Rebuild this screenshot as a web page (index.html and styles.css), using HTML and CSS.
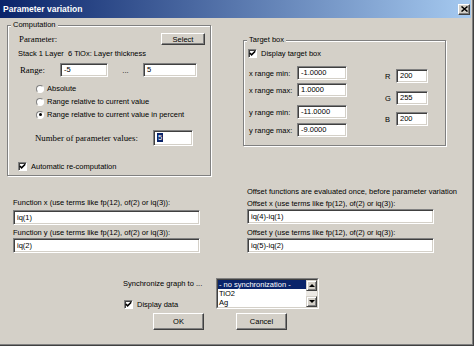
FILE: index.html
```html
<!DOCTYPE html>
<html>
    <head>
        <meta charset='utf-8'>
        <title>Parameter variation</title>
        <link rel="stylesheet" href="styles.css">
    </head>
    <body>
        <div class='window'>
            <div class='titlebar'>
                <span class='title'>Parameter variation</span>
                <div class='close'>
                    <svg width='7' height='6' viewBox='0 0 7 6'>
                        <path d='M0.5 0.5 L6.5 5.5 M6.5 0.5 L0.5 5.5' stroke='#000' stroke-width='1.5' fill='none'/>
                    </svg>
                </div>
            </div>
            <div class='client'>
                <div class='top'>
                    <fieldset class='group computation'>
                        <legend>Computation</legend>
                        <div class='row param-row'>
                            <span class='serif'>Parameter:</span>
                            <div class='btn select-btn'>Select</div>
                        </div>
                        <div class='row stack-row'>Stack 1 Layer&nbsp;&nbsp;6 TiOx: Layer thickness</div>
                        <div class='row range-row'>
                            <span class='serif range-label'>Range:</span>
                            <div class='edit range-from'>-5</div>
                            <span class='dots'>...</span>
                            <div class='edit range-to'>5</div>
                        </div>
                        <div class='radios'>
                            <div class='radio-row'><span class='radio'></span>Absolute</div>
                            <div class='radio-row'><span class='radio'></span>Range relative to current value</div>
                            <div class='radio-row'><span class='radio checked'></span>Range relative to current value in percent</div>
                        </div>
                        <div class='row count-row'>
                            <span class='serif count-label'>Number of parameter values:</span>
                            <div class='edit count-edit'><span class='sel'>5</span></div>
                        </div>
                        <div class='check-row auto-row'>
                            <span class='check'>
                                <svg width='7' height='7' viewBox='0 0 7 7'><polyline points='0.8,3 2.6,4.9 6.2,1.2' stroke='#000' stroke-width='1.6' fill='none'/></svg>
                            </span>
                            Automatic re-computation
                        </div>
                    </fieldset>
                    <fieldset class='group target'>
                        <legend>Target box</legend>
                        <div class='check-row display-row'>
                            <span class='check'>
                                <svg width='7' height='7' viewBox='0 0 7 7'><polyline points='0.8,3 2.6,4.9 6.2,1.2' stroke='#000' stroke-width='1.6' fill='none'/></svg>
                            </span>
                            Display target box
                        </div>
                        <div class='target-body'>
                            <div class='ranges'>
                                <div class='range-line xmin'><span class='rlabel'>x range min:</span><div class='edit redit'>-1.0000</div></div>
                                <div class='range-line xmax'><span class='rlabel'>x range max:</span><div class='edit redit'>1.0000</div></div>
                                <div class='range-line ymin'><span class='rlabel'>y range min:</span><div class='edit redit'>-11.0000</div></div>
                                <div class='range-line ymax'><span class='rlabel'>y range max:</span><div class='edit redit'>-9.0000</div></div>
                            </div>
                            <div class='colors'>
                                <div class='color-line r'><span class='clabel'>R</span><div class='edit cedit'>200</div></div>
                                <div class='color-line g'><span class='clabel'>G</span><div class='edit cedit'>255</div></div>
                                <div class='color-line b'><span class='clabel'>B</span><div class='edit cedit'>200</div></div>
                            </div>
                        </div>
                    </fieldset>
                </div>
                <div class='functions'>
                    <div class='fcol fcol-left'>
                        <div class='flabel fx-label'>Function x (use terms like fp(12), of(2) or iq(3)):</div>
                        <div class='edit fedit'>iq(1)</div>
                        <div class='flabel fy-label'>Function y (use terms like fp(12), of(2) or iq(3)):</div>
                        <div class='edit fedit fy-edit'>iq(2)</div>
                    </div>
                    <div class='fcol fcol-right'>
                        <div class='flabel'>Offset functions are evaluated once, before parameter variation</div>
                        <div class='flabel ox-label'>Offset x (use terms like fp(12), of(2) or iq(3)):</div>
                        <div class='edit fedit ox-edit'>iq(4)-iq(1)</div>
                        <div class='flabel oy-label'>Offset y (use terms like fp(12), of(2) or iq(3)):</div>
                        <div class='edit fedit oy-edit'>iq(5)-iq(2)</div>
                    </div>
                </div>
                <div class='sync'>
                    <div class='sync-left'>
                        <div class='sync-label'>Synchronize graph to ...</div>
                        <div class='check-row data-row'>
                            <span class='check'>
                                <svg width='7' height='7' viewBox='0 0 7 7'><polyline points='0.8,3 2.6,4.9 6.2,1.2' stroke='#000' stroke-width='1.6' fill='none'/></svg>
                            </span>
                            Display data
                        </div>
                    </div>
                    <div class='listbox'>
                        <div class='list-inner'>
                            <div class='items'>
                                <div class='item selected'>- no synchronization -</div>
                                <div class='item'>TiO2</div>
                                <div class='item'>Ag</div>
                            </div>
                            <div class='scrollbar'>
                                <div class='sbtn'><span class='arrow up'></span></div>
                                <div class='track'></div>
                                <div class='sbtn'><span class='arrow down'></span></div>
                            </div>
                        </div>
                    </div>
                </div>
                <div class='buttons'>
                    <div class='btn dlg-btn'>OK</div>
                    <div class='btn dlg-btn'>Cancel</div>
                </div>
            </div>
        </div>
    </body>
</html>
```
FILE: styles.css
```css
*{
    box-sizing: border-box;
}
body{
    margin: 0;
    background-color: #d4d0c8;
    font-family: "Liberation Sans", Arial, sans-serif;
    font-size: 7.5px;
    color: #000;
}

.window{
    width: 474px;
    height: 346px;
    display: flex;
    flex-direction: column;
    padding: 0 3px 3px 0;
    background-color: #d4d0c8;
    box-shadow: inset -1px -1px 0 #404040, inset -2px -2px 0 #808080;
}

.titlebar{
    height: 18px;
    display: flex;
    align-items: center;
    justify-content: space-between;
    padding: 0 1px 0 3px;
    background: linear-gradient(to right, #0a246a, #a6caf0);
    color: #fff;
    font-weight: bold;
    font-size: 8.5px;
}
.close{
    width: 12px;
    height: 11px;
    display: flex;
    align-items: center;
    justify-content: center;
    background-color: #d4d0c8;
    border: 1px solid;
    border-color: #fff #404040 #404040 #fff;
    box-shadow: inset -1px -1px 0 #808080;
}

.serif{
    font-family: "Liberation Serif", "Times New Roman", serif;
    font-size: 8.8px;
}

/* 3d controls */
.edit{
    height: 14px;
    line-height: 12px;
    padding-left: 3px;
    background-color: #fff;
    border: 1px solid;
    border-color: #808080 #fff #fff #808080;
    box-shadow: inset 1px 1px 0 #404040, inset -1px -1px 0 #d4d0c8;
    white-space: nowrap;
    overflow: hidden;
}
.btn{
    display: flex;
    align-items: center;
    justify-content: center;
    background-color: #d4d0c8;
    border: 1px solid;
    border-color: #fff #404040 #404040 #fff;
    box-shadow: inset -1px -1px 0 #808080;
}
.check{
    width: 9px;
    height: 9px;
    display: flex;
    align-items: center;
    justify-content: center;
    background-color: #fff;
    border: 1px solid;
    border-color: #808080 #fff #fff #808080;
    box-shadow: inset 1px 1px 0 #404040;
    margin-right: 4px;
}
.radio{
    width: 8px;
    height: 8px;
    border-radius: 50%;
    background-color: #fff;
    border: 1px solid;
    border-color: #808080 #fff #fff #808080;
    margin-right: 3px;
    display: flex;
    align-items: center;
    justify-content: center;
}
.radio.checked::after{
    content: '';
    width: 3px;
    height: 3px;
    border-radius: 50%;
    background-color: #000;
}

/* group boxes */
.top{
    display: flex;
    align-items: flex-start;
}
.group{
    margin: 0;
    padding: 0;
    border: 1px solid #808080;
    box-shadow: inset 1px 1px 0 #fff, 1px 1px 0 #fff;
    min-width: 0;
}
.group legend{
    margin-left: 3px;
    padding: 0 2px;
    line-height: 10px;
    background-color: #d4d0c8;
}
.computation{
    margin: 2px 0 0 7px;
    width: 204px;
    height: 156px;
}
.target{
    margin: 17px 0 0 32px;
    width: 203px;
    height: 111px;
}

.row{
    display: flex;
    align-items: center;
}
.param-row{
    height: 12px;
    margin-top: 3px;
    padding-left: 11px;
}
.select-btn{
    width: 44px;
    height: 12px;
    margin-left: auto;
    margin-right: 5px;
}
.stack-row{
    height: 9px;
    margin-top: 4px;
    padding-left: 10px;
}
.range-row{
    height: 14px;
    margin-top: 5px;
    padding-left: 12px;
}
.range-label{
    width: 40px;
}
.range-from{
    width: 48px;
}
.dots{
    width: 35px;
    text-align: center;
}
.range-to{
    width: 54px;
}
.radios{
    margin-top: 5px;
    padding-left: 28px;
}
.radio-row{
    height: 13px;
    display: flex;
    align-items: center;
}
.count-row{
    height: 16px;
    margin-top: 9px;
    padding-left: 27px;
}
.count-label{
    width: 118px;
}
.count-edit{
    width: 40px;
    height: 16px;
    line-height: 14px;
}
.sel{
    background-color: #0a246a;
    color: #fff;
    padding: 0 1px;
}
.check-row{
    display: flex;
    align-items: center;
    height: 10px;
}
.auto-row{
    margin-top: 15px;
    padding-left: 10px;
}

.display-row{
    margin-top: 3px;
    padding-left: 4px;
}
.target-body{
    display: flex;
    align-items: flex-start;
}
.ranges{
    padding-left: 5px;
}
.range-line{
    display: flex;
    align-items: center;
    height: 14px;
}
.xmin{ margin-top: 8px; }
.xmax{ margin-top: 3px; }
.ymin{ margin-top: 8px; }
.ymax{ margin-top: 4px; }
.rlabel{
    width: 48px;
}
.redit{
    width: 50px;
}
.colors{
    margin-left: 38px;
}
.color-line{
    display: flex;
    align-items: center;
    height: 14px;
}
.r{ margin-top: 11px; }
.g{ margin-top: 8px; }
.b{ margin-top: 7px; }
.clabel{
    width: 11px;
}
.cedit{
    width: 32px;
}

/* functions */
.functions{
    display: flex;
    align-items: flex-start;
}
.fcol{
    width: 187px;
    display: flex;
    flex-direction: column;
}
.fcol-left{
    margin-left: 13px;
    padding-top: 22px;
}
.fcol-right{
    margin-left: 47px;
    padding-top: 11px;
}
.flabel{
    height: 9px;
    line-height: 9px;
    white-space: nowrap;
}
.fedit{
    height: 15px;
    line-height: 13px;
    margin-top: 3px;
}
.fy-label{ margin-top: 3px; }
.fy-edit{ margin-top: 1px; }
.ox-label{ margin-top: 3px; }
.ox-edit{ margin-top: 1px; }
.oy-label{ margin-top: 4px; }
.oy-edit{ margin-top: 1px; }

/* synchronize */
.sync{
    display: flex;
    align-items: flex-start;
    margin: 25px 0 0 123px;
}
.sync-left{
    width: 93px;
}
.sync-label{
    margin-top: 1px;
    line-height: 9px;
}
.data-row{
    margin-top: 11px;
    padding-left: 1px;
}
.listbox{
    width: 103px;
    height: 31px;
    border: 1px solid;
    border-color: #808080 #fff #fff #808080;
}
.list-inner{
    height: 100%;
    display: flex;
    border: 1px solid;
    border-color: #404040 #d4d0c8 #d4d0c8 #404040;
    background-color: #fff;
}
.items{
    flex: 1;
    overflow: hidden;
}
.item{
    height: 9px;
    line-height: 9px;
    padding-left: 1px;
    white-space: nowrap;
}
.item.selected{
    background-color: #0a246a;
    color: #fff;
}
.scrollbar{
    width: 11px;
    display: flex;
    flex-direction: column;
}
.sbtn{
    height: 11px;
    display: flex;
    align-items: center;
    justify-content: center;
    background-color: #d4d0c8;
    border: 1px solid;
    border-color: #d4d0c8 #404040 #404040 #d4d0c8;
    box-shadow: inset 1px 1px 0 #fff, inset -1px -1px 0 #808080;
}
.track{
    flex: 1;
    background-color: #ece9e4;
}
.arrow{
    width: 0;
    height: 0;
    border-left: 3px solid transparent;
    border-right: 3px solid transparent;
}
.arrow.up{
    border-bottom: 3px solid #000;
}
.arrow.down{
    border-top: 3px solid #000;
}

.buttons{
    display: flex;
    gap: 32px;
    margin: 4px 0 0 153px;
}
.dlg-btn{
    width: 51px;
    height: 17px;
}
```
